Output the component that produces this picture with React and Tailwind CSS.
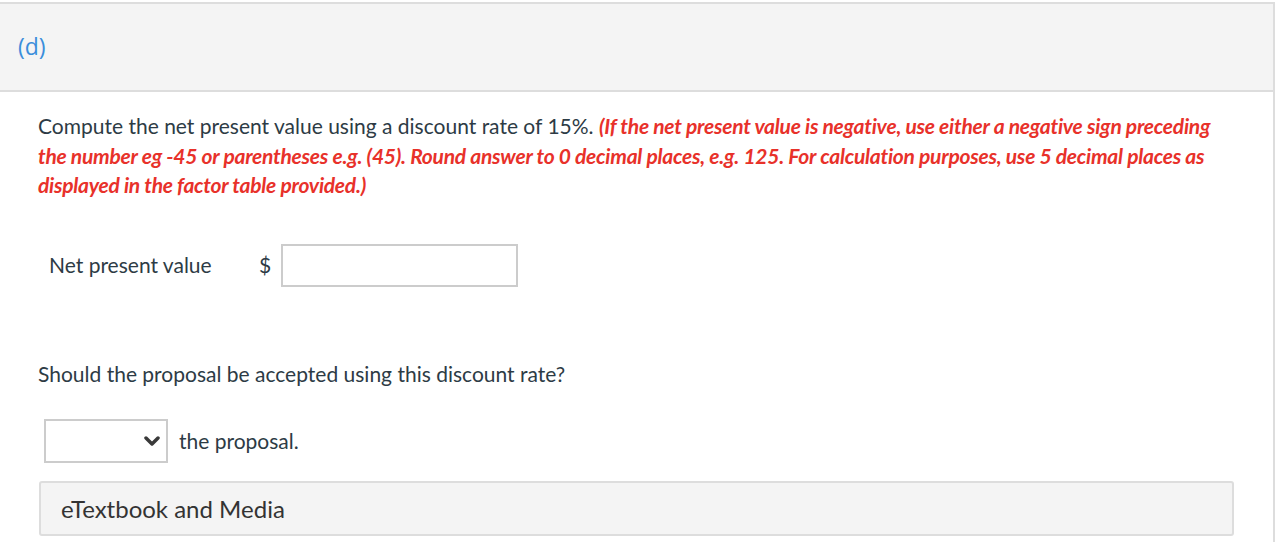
export default function App() {
  return (
    <div className="w-[1276px] h-[542px] overflow-hidden bg-white pt-[2px]" style={{ fontFamily: 'Lato, "Open Sans", sans-serif' }}>
      <div className="w-[1275px] h-[600px] border-t-2 border-r-2 border-[#dddddd]">
        <div className="h-[88px] bg-[#f4f4f4] border-b-2 border-[#dddddd] flex items-center pl-[18px]">
          <span className="text-[23px] text-[#3a8ddb] leading-none mt-[-1px]" style={{ fontFamily: '"Open Sans", sans-serif' }}>
            (d)
          </span>
        </div>

        <div className="pl-[38px] pr-[58px] pt-[19px]">
          <p className="text-[21px] leading-[29.5px] text-[#2d3b45]">
            Compute the net present value using a discount rate of 15%.{' '}
            <span className="font-bold italic text-[#e8312a] tracking-[-0.25px]">
              (If the net present value is negative, use either a negative sign preceding the number eg -45 or
              parentheses e.g. (45). Round answer to 0 decimal places, e.g. 125. For calculation purposes, use 5
              decimal places as displayed in the factor table provided.)
            </span>
          </p>

          <div className="flex items-center mt-[44px] pl-[11px]">
            <span className="text-[21px] text-[#2d3b45] w-[210px]">Net present value</span>
            <span className="text-[21px] text-[#2d3b45] w-[22px]">$</span>
            <input
              type="text"
              className="w-[237px] h-[43px] border-2 border-[#cccccc] bg-white outline-none px-2"
            />
          </div>

          <p className="text-[21px] text-[#2d3b45] mt-[71px]">
            Should the proposal be accepted using this discount rate?
          </p>

          <div className="flex items-center mt-[30px] pl-[6px]">
            <div className="w-[124px] h-[44px] border-2 border-[#cccccc] bg-white flex items-center justify-end pr-[6px]">
              <svg width="16" height="12" viewBox="0 0 16 12" className="text-[#3a3a3a]">
                <path d="M2 3l6 6 6-6" fill="none" stroke="currentColor" strokeWidth="3.5" strokeLinecap="round" strokeLinejoin="round" />
              </svg>
            </div>
            <span className="text-[21px] text-[#2d3b45] ml-[11px]">the proposal.</span>
          </div>

          <div className="mt-[18px] ml-[1px] w-[1195px] h-[55px] bg-[#f4f4f4] border-2 border-[#dddddd] rounded-[3px] flex items-center pl-[20px]">
            <span className="text-[24px] text-[#333333]">eTextbook and Media</span>
          </div>
        </div>
      </div>
    </div>
  )
}
